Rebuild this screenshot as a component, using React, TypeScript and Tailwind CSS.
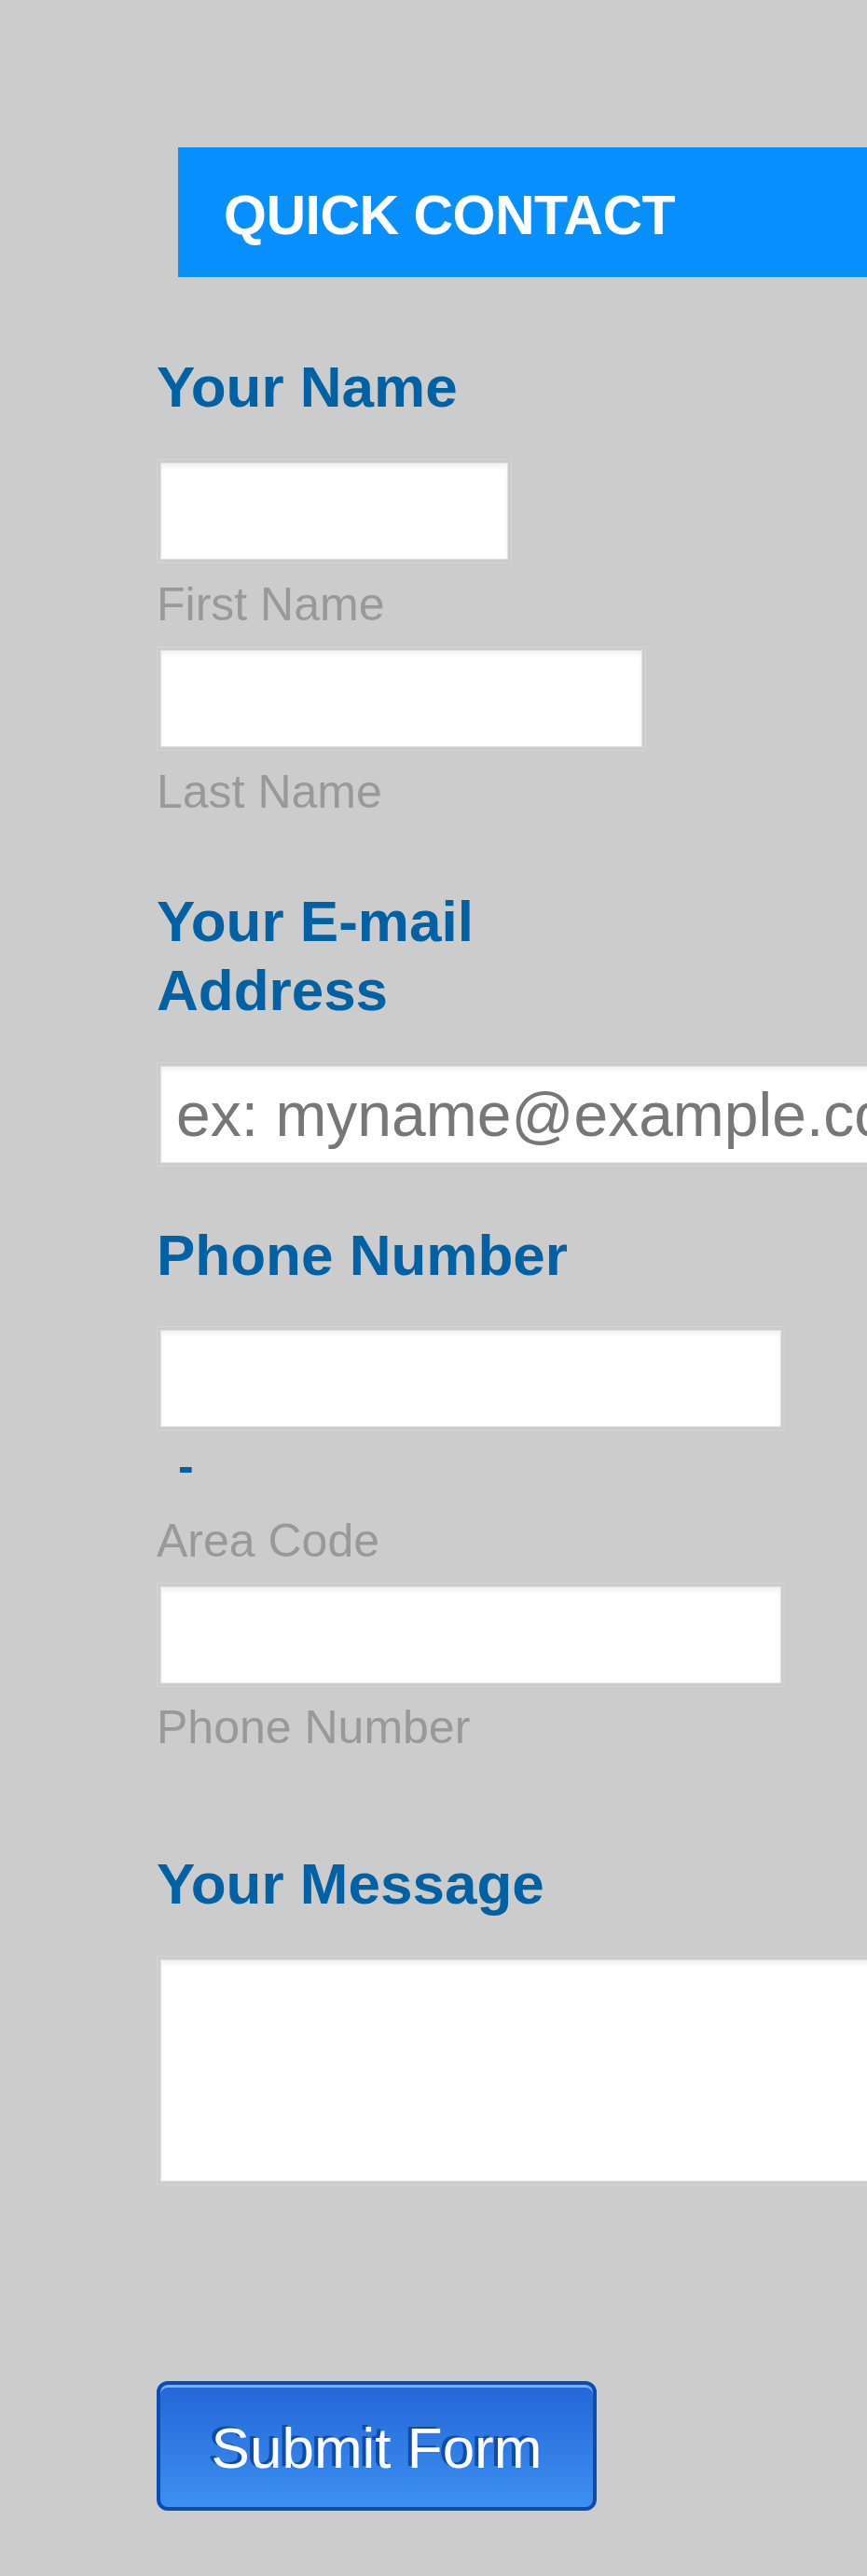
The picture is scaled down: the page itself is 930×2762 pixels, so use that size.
import React from "react";

function Field({ width, placeholder }: { width: string; placeholder?: string }) {
  return (
    <div className={`${width} h-[112px] border border-[#d5d5d5] p-[3px]`}>
      <input
        type="text"
        placeholder={placeholder}
        className="h-full w-full border border-[#e2e2e2] bg-white pl-[16px] text-[66px] text-[#333] shadow-[inset_0_4px_4px_rgba(0,0,0,0.05)] outline-none placeholder:text-[#777]"
      />
    </div>
  );
}

function Heading({ children, mt }: { children: React.ReactNode; mt: string }) {
  return (
    <div className={`${mt} w-[500px] text-[62px] font-bold leading-[74px] text-[#0061a5]`}>
      {children}
    </div>
  );
}

function Sub({ children, mt }: { children: React.ReactNode; mt: string }) {
  return <div className={`${mt} text-[50px] leading-[60px] text-[#999999]`}>{children}</div>;
}

export default function App() {
  return (
    <div className="min-h-[2762px] w-full overflow-hidden bg-[#cccccc] font-['Liberation_Sans',Arial,sans-serif]">
      <div className="pl-[168px] pt-[158px]">
        <div className="ml-[23px] h-[139px] bg-[#0790fd] pl-[49px] pt-[38px] text-[59px] font-bold leading-[70px] tracking-[-0.5px] text-white">
          QUICK CONTACT
        </div>

        <Heading mt="mt-[81px]">Your Name</Heading>
        <div className="mt-[40px]">
          <Field width="w-[381px]" />
        </div>
        <Sub mt="mt-[14px]">First Name</Sub>
        <div className="mt-[15px]">
          <Field width="w-[525px]" />
        </div>
        <Sub mt="mt-[14px]">Last Name</Sub>

        <Heading mt="mt-[72px]">Your E-mail Address</Heading>
        <div className="mt-[40px]">
          <Field width="w-[900px]" placeholder="ex: myname@example.com" />
        </div>

        <Heading mt="mt-[58px]">Phone Number</Heading>
        <div className="mt-[39px]">
          <Field width="w-[674px]" />
        </div>
        <div className="mt-[8px] pl-[23px] text-[50px] font-bold leading-[60px] text-[#0061a5]">-</div>
        <Sub mt="mt-[20px]">Area Code</Sub>
        <div className="mt-[15px]">
          <Field width="w-[674px]" />
        </div>
        <Sub mt="mt-[13px]">Phone Number</Sub>

        <Heading mt="mt-[101px]">Your Message</Heading>
        <div className="mt-[40px] h-[246px] w-[900px] border border-[#d5d5d5] p-[3px]">
          <textarea className="h-full w-full resize-none border border-[#e2e2e2] bg-white shadow-[inset_0_4px_4px_rgba(0,0,0,0.05)] outline-none" />
        </div>

        <div className="mt-[210px]">
          <button
            type="button"
            className="block h-[139px] w-[472px] rounded-[12px] border-[4px] border-[#0b4bb2] bg-gradient-to-b from-[#2466d6] to-[#3d90f1] pt-[4px] text-center text-[62px] leading-[70px] text-white shadow-[inset_0_3px_0_#78aff5] [text-shadow:-4px_-2px_0_#0f4aae]"
          >
            Submit Form
          </button>
        </div>
      </div>
    </div>
  );
}
